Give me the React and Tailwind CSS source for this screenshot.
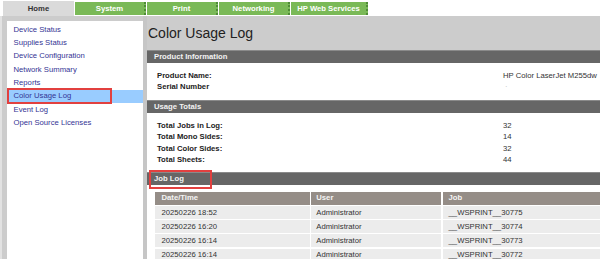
const tabs = ["System", "Print", "Networking", "HP Web Services"];

const links = [
    "Device Status",
    "Supplies Status",
    "Device Configuration",
    "Network Summary",
    "Reports",
    "Color Usage Log",
    "Event Log",
    "Open Source Licenses",
];

const jobs = [
    { date: "20250226 18:52", user: "Administrator", job: "__WSPRINT__30775" },
    { date: "20250226 16:20", user: "Administrator", job: "__WSPRINT__30774" },
    { date: "20250226 16:14", user: "Administrator", job: "__WSPRINT__30773" },
    { date: "20250226 16:14", user: "Administrator", job: "__WSPRINT__30772" },
];

const SectionBar = ({ title, children }) => (
    <div className="relative h-[13px] bg-[#666666] border-t border-[#8a8a8a] pl-[7px] flex items-center font-bold text-[#f2f2f2]">
        {title}
        {children}
    </div>
);

const App = () => {
    return (
        <div className="w-[600px] h-[259px] overflow-hidden bg-[#cccccc] text-[7.7px] leading-none text-[#222] font-['Liberation_Sans',Arial,sans-serif]">
            {/* tab strip */}
            <div className="h-[16px] bg-white flex items-end pl-[3px]">
                <div className="w-[71px] h-[15px] bg-[#dadada] flex items-center justify-center font-bold text-[#333]">
                    Home
                </div>
                <div className="flex self-start mt-[2px] ml-[1px] gap-[1px]">
                    {tabs.map((t) => (
                        <div
                            key={t}
                            className={`${t === "HP Web Services" ? "w-[77px]" : "w-[71px]"} h-[13px] bg-[#7ab957] border-r-2 border-dotted border-[#4f8b37] flex items-center justify-center font-bold text-white`}
                        >
                            {t}
                        </div>
                    ))}
                </div>
            </div>

            <div className="flex">
                <div className="w-[2px] h-[243px] bg-[#e2e2e2]" />
                <div className="w-[5px]" />

                {/* sidebar */}
                <div className="relative w-[136px] h-[239px] mt-[4.7px] bg-white pt-[2px]">
                    {links.map((l) => (
                        <div
                            key={l}
                            className={`h-[13.4px] flex items-center pl-[6.5px] text-[#343494] ${l === "Color Usage Log" ? "bg-[#99ccff]" : ""}`}
                        >
                            {l}
                        </div>
                    ))}
                    <div className="absolute left-0 top-[67.6px] w-[105px] h-[15.4px] border-2 border-[#e2403f]" />
                </div>

                <div className="w-[4px] bg-[#c6c6c6]" />

                {/* main */}
                <div className="flex-1">
                    <div className="h-[34px] pt-[9px] pl-[1px] text-[14px] leading-[16px] text-[#222]">
                        Color Usage Log
                    </div>

                    <SectionBar title="Product Information" />
                    <div className="bg-white pt-[7px] pb-[8px] pl-[10px]">
                        <div className="grid grid-cols-[346px_1fr]">
                            <div className="h-[11px] flex items-center font-bold">Product Name:</div>
                            <div className="h-[11px] flex items-center text-[#333]">HP Color LaserJet M255dw</div>
                            <div className="h-[11px] flex items-center font-bold">Serial Number</div>
                            <div className="h-[11px] flex items-center pl-[2px] text-[#bbb]">·</div>
                        </div>
                    </div>

                    <SectionBar title="Usage Totals" />
                    <div className="bg-white pt-[7px] pb-[6px] pl-[10px]">
                        <div className="grid grid-cols-[346px_1fr]">
                            {[
                                ["Total Jobs in Log:", "32"],
                                ["Total Mono Sides:", "14"],
                                ["Total Color Sides:", "32"],
                                ["Total Sheets:", "44"],
                            ].map(([k, v]) => (
                                <div key={k} className="contents">
                                    <div className="h-[11.4px] flex items-center font-bold">{k}</div>
                                    <div className="h-[11.4px] flex items-center text-[#333]">{v}</div>
                                </div>
                            ))}
                        </div>
                    </div>

                    <SectionBar title="Job Log">
                        <div className="absolute left-[2px] top-[-3px] w-[63px] h-[19px] border-2 border-[#e2403f]" />
                    </SectionBar>
                    <div className="bg-white pt-[7px] pl-[8px] h-[80px]">
                        <div className="grid grid-cols-[155px_130px_1fr] gap-[1.3px]">
                            <div className="h-[13.4px] bg-[#958d87] text-[#f4f4f4] font-bold flex items-center pl-[6.5px]">Date/Time</div>
                            <div className="h-[13.4px] bg-[#958d87] text-[#f4f4f4] font-bold flex items-center pl-[5px]">User</div>
                            <div className="h-[13.4px] bg-[#958d87] text-[#f4f4f4] font-bold flex items-center pl-[6px]">Job</div>
                            {jobs.map((j, i) => (
                                <div key={i} className="contents">
                                    <div className="h-[12.8px] bg-[#ececec] text-[#333] flex items-center pl-[6.5px]">{j.date}</div>
                                    <div className="h-[12.8px] bg-[#ececec] text-[#333] flex items-center pl-[5px]">{j.user}</div>
                                    <div className="h-[12.8px] bg-[#ececec] text-[#333] flex items-center pl-[6px]">{j.job}</div>
                                </div>
                            ))}
                        </div>
                    </div>
                </div>
            </div>
        </div>
    );
};

export default App;
